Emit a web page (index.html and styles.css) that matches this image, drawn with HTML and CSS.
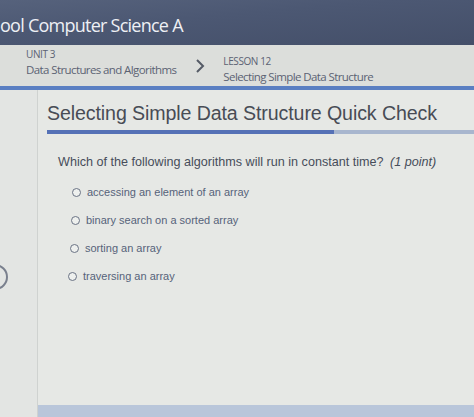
FILE: index.html
```html
<!DOCTYPE html>
<html>
<head>
<meta charset="utf-8">
<link rel="stylesheet" href="styles.css">
</head>
<body>
<header class="topbar">
  <div class="course">ool Computer Science A</div>
</header>
<nav class="crumbs">
  <div class="crumb">
    <div class="crumb-label">UNIT 3</div>
    <div class="crumb-title">Data Structures and Algorithms</div>
  </div>
  <svg class="chev" width="10" height="16" viewBox="0 0 10 16"><path d="M2 2 L8 8 L2 14" fill="none" stroke="#555b66" stroke-width="2"/></svg>
  <div class="crumb crumb-lesson">
    <div class="crumb-label">LESSON 12</div>
    <div class="crumb-title">Selecting Simple Data Structure</div>
  </div>
</nav>
<div class="rule"></div>
<main class="page">
  <aside class="side">
    <div class="side-btn"></div>
  </aside>
  <section class="content">
    <h1 class="title">Selecting Simple Data Structure Quick Check</h1>
    <div class="progress"><div class="progress-fill"></div></div>
    <p class="question">Which of the following algorithms will run in constant time? <em>(1 point)</em></p>
    <ul class="options">
      <li class="opt o1"><span class="radio"></span>accessing an element of an array</li>
      <li class="opt o2"><span class="radio"></span>binary search on a sorted array</li>
      <li class="opt o3"><span class="radio"></span>sorting an array</li>
      <li class="opt o4"><span class="radio"></span>traversing an array</li>
    </ul>
    <div class="spacer"></div>
    <div class="footer-bar"></div>
  </section>
</main>
</body>
</html>
```
FILE: styles.css
```css
html, body {
  margin: 0;
  padding: 0;
}
body {
  width: 474px;
  height: 417px;
  overflow: hidden;
  background: #e2e4e2;
  font-family: "Liberation Sans", Arial, sans-serif;
  display: flex;
  flex-direction: column;
}
.topbar {
  height: 45px;
  flex: none;
  background: linear-gradient(175deg, #56627c 0%, #4c5873 40%, #444f69 100%);
  box-sizing: border-box;
  padding-top: 12px;
}
.course {
  font-family: "Open Sans", "Noto Sans", sans-serif;
  font-size: 18px;
  color: #eef0f5;
  letter-spacing: -0.75px;
  line-height: 26px;
}
.crumbs {
  height: 41px;
  flex: none;
  background: #dcdedb;
  display: flex;
  align-items: flex-start;
  font-family: "Open Sans", "Noto Sans", sans-serif;
  color: #5b6273;
}
.crumb {
  padding-left: 26px;
  padding-top: 2px;
}
.crumb-label {
  font-size: 10px;
  line-height: 14px;
  letter-spacing: -0.4px;
}
.crumb-title {
  font-size: 11.5px;
  line-height: 17px;
  letter-spacing: -0.6px;
}
.chev {
  margin-left: 19px;
  margin-top: 13px;
}
.crumb-lesson {
  padding-left: 18px;
  padding-top: 9px;
}
.rule {
  height: 4px;
  flex: none;
  background: #5a7fc2;
}
.page {
  flex: 1;
  display: flex;
}
.side {
  width: 37px;
  flex: none;
  background: #e3e5e3;
  border-right: 1px solid #cfd2d0;
  position: relative;
}
.side-btn {
  position: absolute;
  left: -18px;
  top: 174px;
  width: 22px;
  height: 22px;
  border: 2px solid #7a808e;
  border-radius: 50%;
}
.content {
  flex: 1;
  background: #e6e8e5;
  display: flex;
  flex-direction: column;
  padding-left: 9px;
}
.title {
  margin: 0;
  padding-top: 10px;
  font-weight: normal;
  font-size: 19.6px;
  line-height: 26px;
  color: #484c55;
  letter-spacing: -0.1px;
}
.progress {
  margin-top: 4px;
  height: 4px;
  background: #a8b6ce;
}
.progress-fill {
  width: 287px;
  height: 4px;
  background: #5571b6;
}
.question {
  margin: 20px 0 0 11px;
  font-size: 12.6px;
  line-height: 16px;
  color: #474d5a;
}
.question em {
  margin-left: 3px;
}
.options {
  list-style: none;
  margin: 8px 0 0 0;
  padding: 0;
}
.opt {
  display: flex;
  align-items: center;
  height: 28px;
  font-size: 11px;
  color: #56637a;
}
.o1 { padding-left: 25px; }
.o2 { padding-left: 24px; }
.o3 { padding-left: 23px; }
.o4 { padding-left: 21px; }
.radio {
  width: 7px;
  height: 7px;
  border: 1.5px solid #6a7384;
  border-radius: 50%;
  margin-right: 6px;
  background: #eef0ee;
}
.spacer {
  flex: 1;
}
.footer-bar {
  height: 12px;
  background: #b9c6da;
  margin-left: -9px;
}
```
